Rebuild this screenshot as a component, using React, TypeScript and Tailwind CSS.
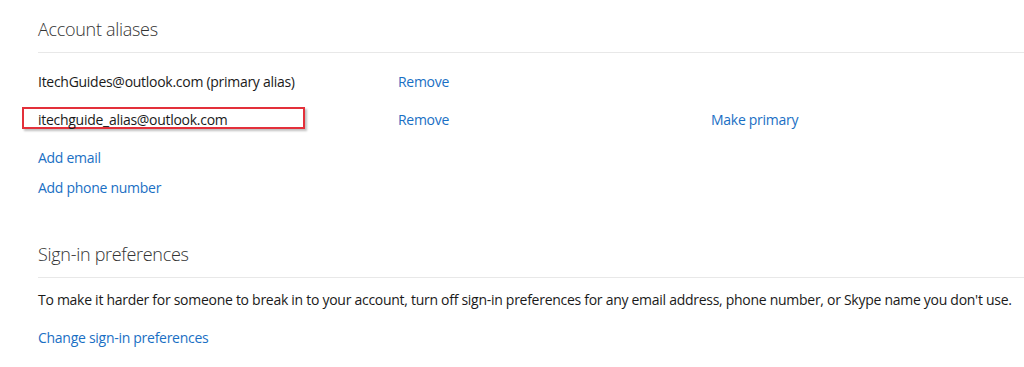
export default function App() {
  const font = { fontFamily: '"Open Sans", "Noto Sans", Arial, sans-serif' };
  return (
    <div className="w-[1024px] h-[367px] bg-white overflow-hidden pl-[38px]" style={font}>
      <div className="pt-[15px]">
        <h2 className="text-[18px] leading-[28px] font-light tracking-[-0.3px] text-[#333]">Account aliases</h2>
        <div className="mt-[9px] border-t border-[#e8e8e8]" />
        <div className="mt-[19px] grid grid-cols-[360px_313px_auto] text-[14px] leading-[20px] tracking-[-0.28px] text-[#1a1a1a]">
          <div>ItechGuides@outlook.com (primary alias)</div>
          <a className="text-[#1a6fc4]">Remove</a>
          <div />
        </div>
        <div className="mt-[18px] grid grid-cols-[360px_313px_auto] text-[14px] leading-[20px] tracking-[-0.28px] text-[#1a1a1a]">
          <div className="relative">
            <span className="absolute left-[-16px] top-[-3px] w-[283px] h-[22px] border-2 border-[#e3303a] shadow-[2px_2px_2px_rgba(0,0,0,0.25)]" />
            <span className="relative">itechguide_alias@outlook.com</span>
          </div>
          <a className="text-[#1a6fc4]">Remove</a>
          <a className="text-[#1a6fc4]">Make primary</a>
        </div>
        <div className="mt-[18px] text-[14px] leading-[20px] tracking-[-0.28px] text-[#1a6fc4]">Add email</div>
        <div className="mt-[10px] text-[14px] leading-[20px] tracking-[-0.28px] text-[#1a6fc4]">Add phone number</div>
        <h2 className="mt-[42px] text-[18px] leading-[28px] font-light tracking-[-0.3px] text-[#333]">Sign-in preferences</h2>
        <div className="mt-[9px] border-t border-[#e8e8e8]" />
        <div className="mt-[12px] text-[14px] leading-[20px] tracking-[-0.28px] text-[#1a1a1a] whitespace-nowrap">
          To make it harder for someone to break in to your account, turn off sign-in preferences for any email address, phone number, or Skype name you don't use.
        </div>
        <div className="mt-[18px] text-[14px] leading-[20px] tracking-[-0.28px] text-[#1a6fc4]">Change sign-in preferences</div>
      </div>
    </div>
  );
}
